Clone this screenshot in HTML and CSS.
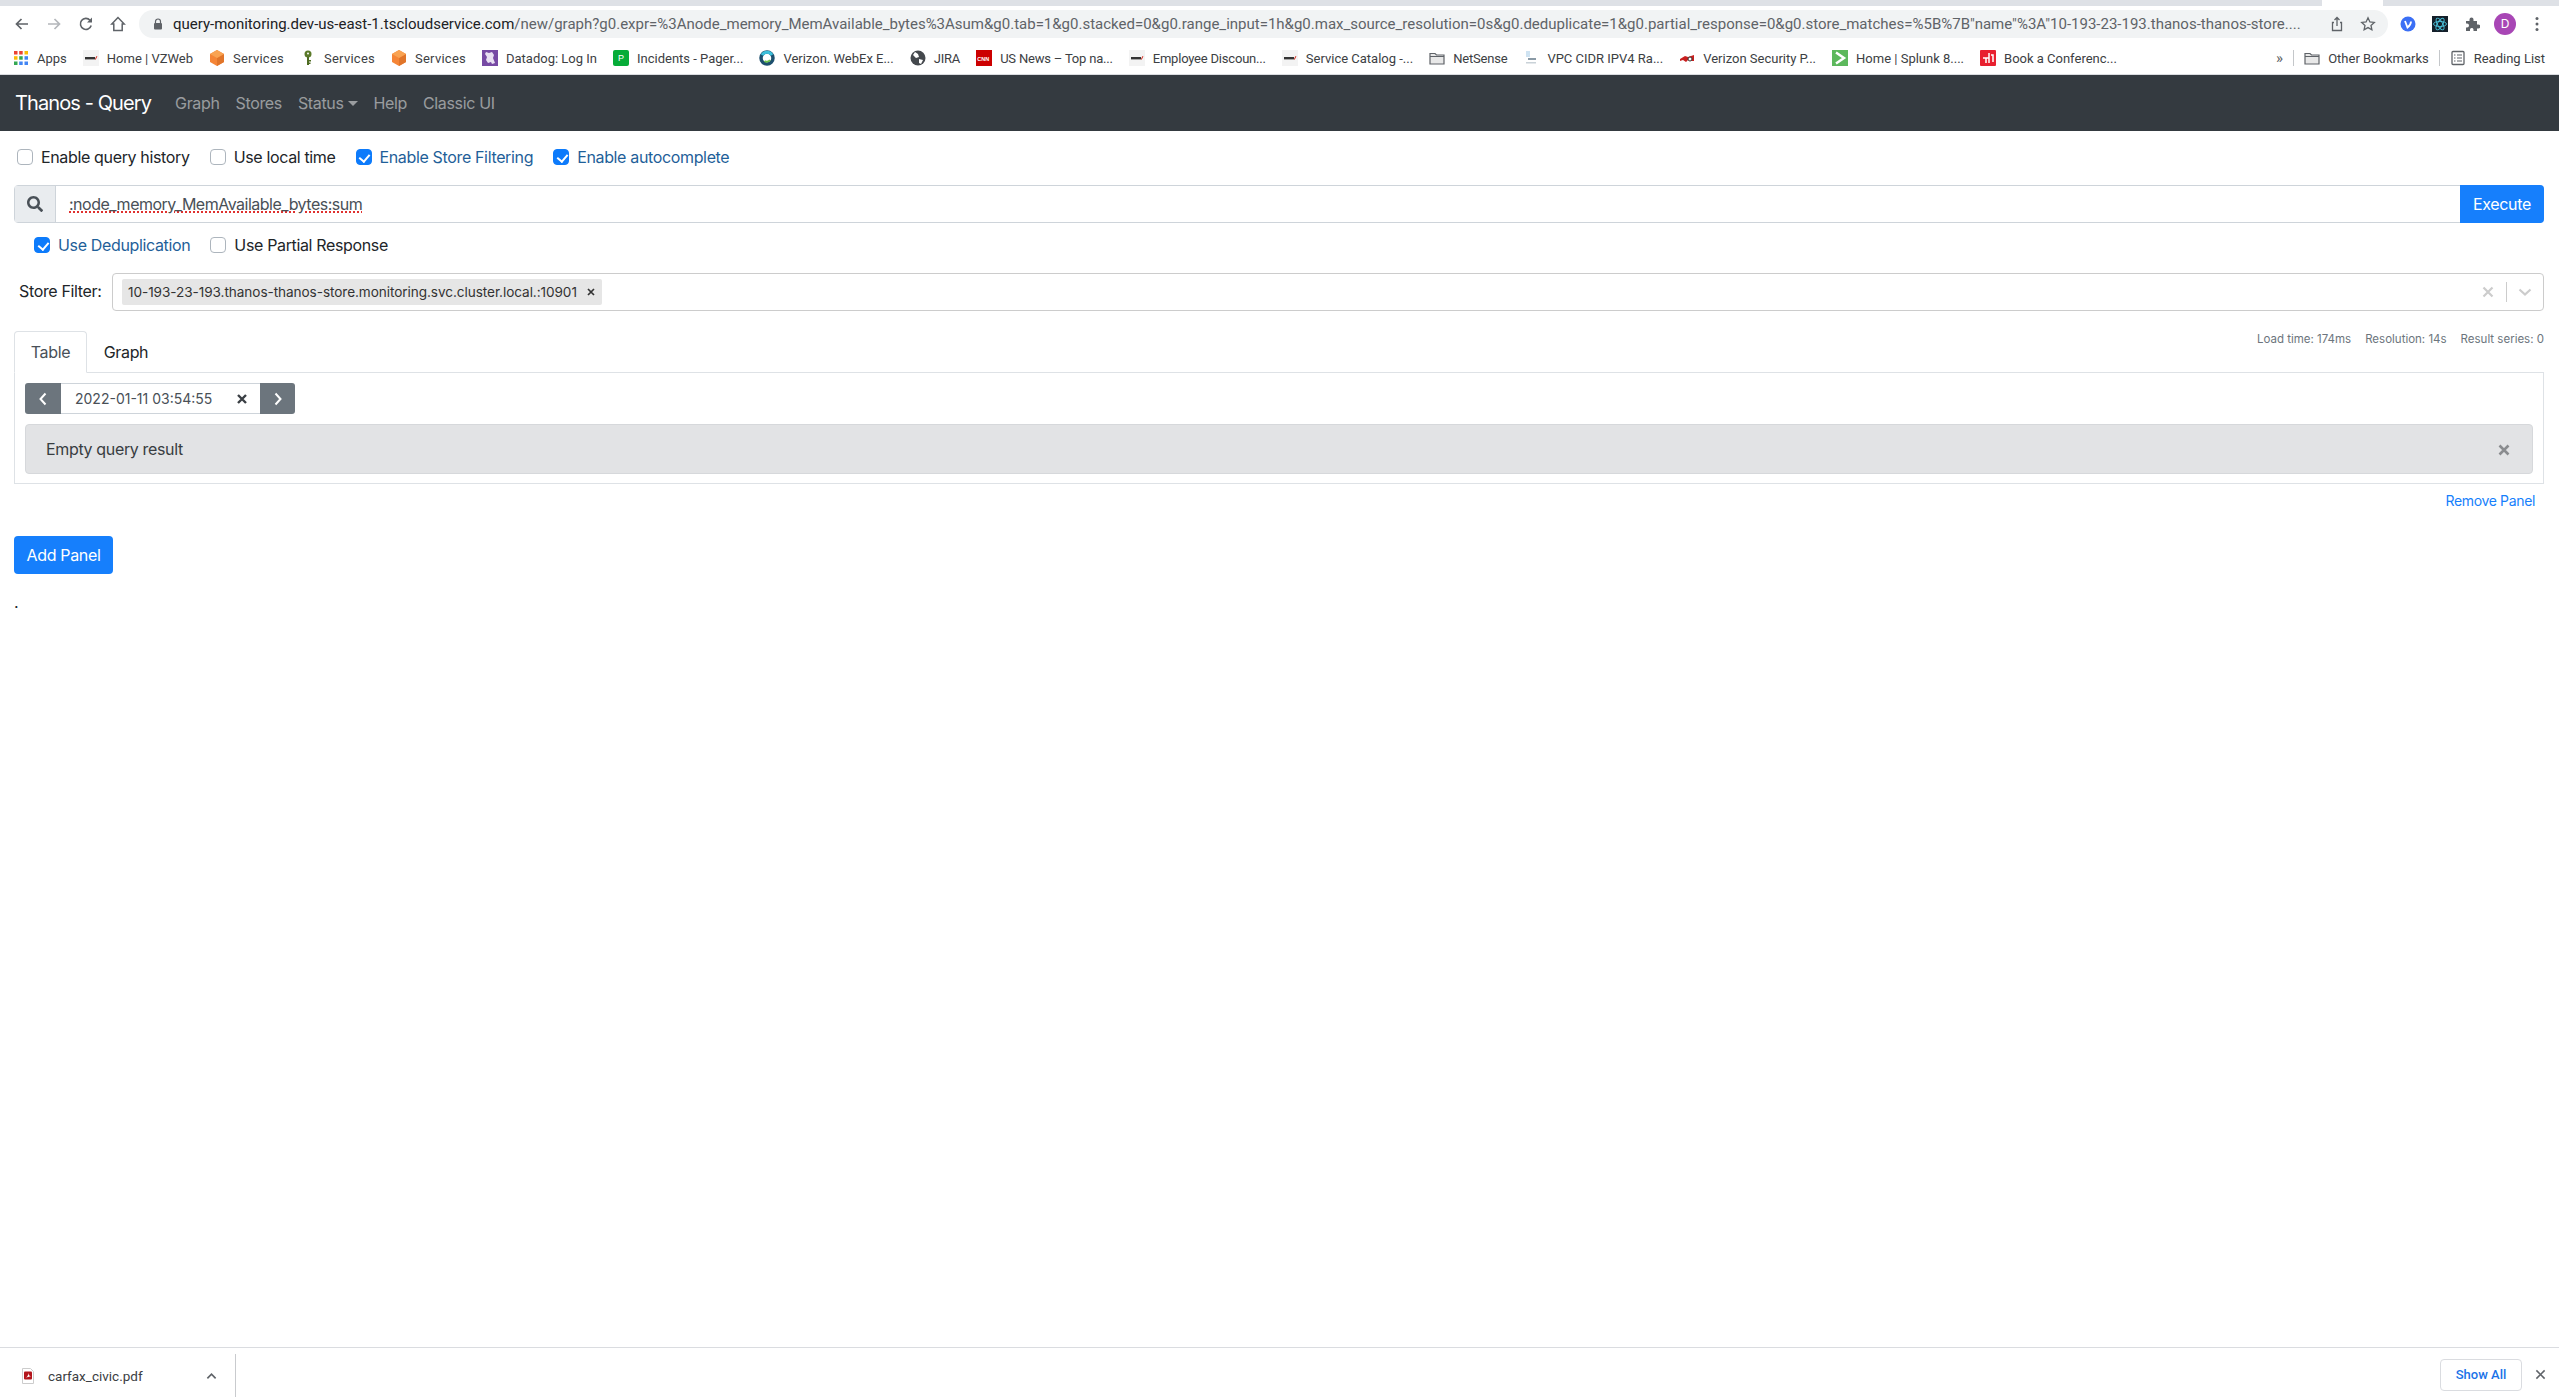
FILE: index.html
```html
<!DOCTYPE html>
<html lang="en">
<head>
    <meta charset="UTF-8">
    <title>Thanos | Highly available Prometheus setup</title>
    <link rel="stylesheet" href="styles.css">
</head>
<body>
    <svg class="sprite" xmlns="http://www.w3.org/2000/svg">
        <symbol id="ic-vz" viewBox="0 0 16 16"><rect width="16" height="16" fill="#f3f3f3"/><rect x="2" y="7" width="10" height="2.4" fill="#333"/><path d="M12 9l1.6-3 .8.3L12.6 10z" fill="#d52b1e"/></symbol>
        <symbol id="ic-cube" viewBox="0 0 16 16"><path d="M8 0l7 4v8l-7 4-7-4V4z" fill="#f58536"/><path d="M8 8l7-4v8l-7 4z" fill="#e0752a"/><path d="M8 0l7 4-7 4-7-4z" fill="#f9a352"/></symbol>
        <symbol id="ic-folder" viewBox="0 0 16 16"><path d="M1 3.5h5l1.5 1.5H15v9H1z" fill="#e8e8e8" stroke="#5f6368" stroke-width="1.2"/><path d="M1 6.5h14" stroke="#5f6368" stroke-width="1"/></symbol>
    </svg>

    <div class="tab-strip"><div class="tab-strip-active"></div></div>

    <div class="toolbar">
        <svg class="tool-icon" viewBox="0 0 16 16"><path d="M14 8H3M7.5 3L2.5 8l5 5" fill="none" stroke="#5f6368" stroke-width="1.7"/></svg>
        <svg class="tool-icon" viewBox="0 0 16 16"><path d="M2 8h11M8.5 3l5 5-5 5" fill="none" stroke="#b4b7bb" stroke-width="1.7"/></svg>
        <svg class="tool-icon" viewBox="0 0 16 16"><path d="M13.2 9.5A5.5 5.5 0 1 1 12 4.2" fill="none" stroke="#5f6368" stroke-width="1.6"/><path d="M14 1.5v5h-5z" fill="#5f6368"/></svg>
        <svg class="tool-icon" viewBox="0 0 16 16"><path d="M8 1.5L1.8 8h2v6.5h8.4V8h2z" fill="none" stroke="#5f6368" stroke-width="1.5"/></svg>
        <div class="omnibox">
            <svg class="lock" viewBox="0 0 10 12"><path d="M2.5 5V3.5a2.5 2.5 0 0 1 5 0V5" fill="none" stroke="#5f6368" stroke-width="1.2"/><rect x="1" y="5" width="8" height="6.5" rx="1" fill="#5f6368"/></svg>
            <div class="url"><span class="url-host">query-monitoring.dev-us-east-1.tscloudservice.com</span>/new/graph?g0.expr=%3Anode_memory_MemAvailable_bytes%3Asum&amp;g0.tab=1&amp;g0.stacked=0&amp;g0.range_input=1h&amp;g0.max_source_resolution=0s&amp;g0.deduplicate=1&amp;g0.partial_response=0&amp;g0.store_matches=%5B%7B"name"%3A"10-193-23-193.thanos-thanos-store....</div>
            <svg class="omni-icon" viewBox="0 0 16 16"><path d="M8 10V1.5M5.5 4L8 1.5 10.500 4M5 6.500H3.500v8h9v-8H11" fill="none" stroke="#5f6368" stroke-width="1.300"/></svg>
            <svg class="omni-icon" viewBox="0 0 16 16"><path d="M8 1.800l1.900 4.100 4.400.500-3.300 3 .9 4.400L8 11.600l-3.900 2.200.9-4.400-3.300-3 4.400-.5z" fill="none" stroke="#5f6368" stroke-width="1.300"/></svg>
        </div>
        <div class="ext-icons">
            <svg class="ext" viewBox="0 0 16 16"><circle cx="8" cy="8" r="7.500" fill="#3b6ff5"/><path d="M5 5l2.500 6.500C9.500 10 11 7.500 11 5.500" fill="none" stroke="#fff" stroke-width="1.800"/></svg>
            <svg class="ext" viewBox="0 0 16 16"><rect width="16" height="16" fill="#14202a"/><g fill="none" stroke="#4cc4dd" stroke-width="0.900"><ellipse cx="8" cy="8" rx="6.500" ry="2.600"/><ellipse cx="8" cy="8" rx="6.500" ry="2.600" transform="rotate(60 8 8)"/><ellipse cx="8" cy="8" rx="6.500" ry="2.600" transform="rotate(120 8 8)"/></g></svg>
            <svg class="ext" viewBox="0 0 16 16"><path d="M2 5h3.500V3.500a2 2 0 0 1 4 0V5H13v3.500h1.300a2 2 0 0 1 0 4H13V15H9.500v-1.500a1.800 1.800 0 0 0-3.500 0V15H2v-3.500h1a2 2 0 0 0 0-4H2z" fill="#5f6368"/></svg>
            <div class="avatar">D</div>
            <svg class="menu-dots" viewBox="0 0 4 16"><circle cx="2" cy="2.500" r="1.500" fill="#5f6368"/><circle cx="2" cy="8" r="1.500" fill="#5f6368"/><circle cx="2" cy="13.500" r="1.500" fill="#5f6368"/></svg>
        </div>
    </div>

    <div class="bookmarks">
        <div class="bm bm-apps">
            <svg class="fav" viewBox="0 0 16 16">
                <rect x="1" y="1" width="3.500" height="3.500" fill="#ea4335"/><rect x="6.200" y="1" width="3.500" height="3.500" fill="#ea4335"/><rect x="11.500" y="1" width="3.500" height="3.500" fill="#fbbc05"/>
                <rect x="1" y="6.200" width="3.500" height="3.500" fill="#fbbc05"/><rect x="6.200" y="6.200" width="3.500" height="3.500" fill="#34a853"/><rect x="11.500" y="6.200" width="3.500" height="3.500" fill="#4285f4"/>
                <rect x="1" y="11.500" width="3.500" height="3.500" fill="#34a853"/><rect x="6.200" y="11.500" width="3.500" height="3.500" fill="#4285f4"/><rect x="11.500" y="11.500" width="3.500" height="3.500" fill="#4285f4"/>
            </svg>
            <span>Apps</span>
        </div>
        <div class="bm"><svg class="fav"><use href="#ic-vz"/></svg><span>Home | VZWeb</span></div>
        <div class="bm bm-wide"><svg class="fav"><use href="#ic-cube"/></svg><span>Services</span></div>
        <div class="bm bm-wide">
            <svg class="fav" viewBox="0 0 16 16"><circle cx="8" cy="4" r="3.500" fill="#5b7a2a"/><circle cx="8" cy="3.500" r="1" fill="#fff"/><path d="M7 7h2v8H7zM9 10h2v1.500H9zM9 12.500h1.500V14H9z" fill="#4e6b22"/></svg>
            <span>Services</span>
        </div>
        <div class="bm bm-wide"><svg class="fav"><use href="#ic-cube"/></svg><span>Services</span></div>
        <div class="bm">
            <svg class="fav" viewBox="0 0 16 16"><rect width="16" height="16" fill="#774aa4"/><path d="M4 2l3 1 3-1 2 3-1 3 2 5-3 1-1-2-3 1-2-3 1-3-2-3z" fill="#e9e0f2"/></svg>
            <span>Datadog: Log In</span>
        </div>
        <div class="bm">
            <svg class="fav" viewBox="0 0 16 16"><rect width="16" height="16" rx="2" fill="#06ac38"/><text x="5" y="11" class="fav-letter">P</text></svg>
            <span>Incidents - Pager...</span>
        </div>
        <div class="bm">
            <svg class="fav" viewBox="0 0 16 16"><circle cx="8" cy="8" r="6" fill="none" stroke="#1d4f6e" stroke-width="3.500"/><path d="M3 5A6 6 0 0 1 13 5" fill="none" stroke="#3cc0dc" stroke-width="3"/><path d="M5.500 11a4 4 0 0 0 5.500-1" fill="none" stroke="#6cc04a" stroke-width="2"/></svg>
            <span>Verizon. WebEx E...</span>
        </div>
        <div class="bm bm-tight">
            <svg class="fav" viewBox="0 0 16 16"><circle cx="8" cy="8" r="7.500" fill="#44484d"/><path d="M5 2l3 2 1 3-3 1-3-3zM9 9l4 1-2 4-2-1z" fill="#fff"/></svg>
            <span>JIRA</span>
        </div>
        <div class="bm bm-tight">
            <svg class="fav" viewBox="0 0 16 16"><rect width="16" height="16" fill="#cc0000"/><text x="1.200" y="10.500" class="fav-cnn">CNN</text></svg>
            <span>US News – Top na...</span>
        </div>
        <div class="bm bm-tight"><svg class="fav"><use href="#ic-vz"/></svg><span>Employee Discoun...</span></div>
        <div class="bm"><svg class="fav"><use href="#ic-vz"/></svg><span>Service Catalog -...</span></div>
        <div class="bm bm-tight"><svg class="fav"><use href="#ic-folder"/></svg><span>NetSense</span></div>
        <div class="bm">
            <svg class="fav" viewBox="0 0 16 16"><rect x="3" y="1" width="4" height="6" fill="#cfe3f2"/><rect x="5" y="8" width="8" height="2" fill="#8a9aa6"/><rect x="3" y="12" width="10" height="1.500" fill="#c9d2d8"/></svg>
            <span>VPC CIDR IPV4 Ra...</span>
        </div>
        <div class="bm">
            <svg class="fav" viewBox="0 0 16 16"><path d="M1 9l5-3 3 1 6-2v6h-3l-2-2-3 3-3-2-3 1z" fill="#c8201f"/><circle cx="11" cy="9" r="2" fill="#fff" stroke="#333"/></svg>
            <span>Verizon Security P...</span>
        </div>
        <div class="bm">
            <svg class="fav" viewBox="0 0 16 16"><rect width="16" height="16" fill="#5cb85c"/><path d="M4 2.500L12 8l-8 5.500" fill="none" stroke="#fff" stroke-width="2.500"/></svg>
            <span>Home | Splunk 8....</span>
        </div>
        <div class="bm">
            <svg class="fav" viewBox="0 0 16 16"><rect width="16" height="16" rx="1" fill="#e8202f"/><path d="M3 8h6M9 3v10M6 8v5M11 5h2v7" fill="none" stroke="#fff" stroke-width="1.500"/></svg>
            <span>Book a Conferenc...</span>
        </div>
        <div class="bm-end">
            <span class="bm-more">»</span>
            <div class="bm-sep"></div>
            <div class="bm"><svg class="fav"><use href="#ic-folder"/></svg><span>Other Bookmarks</span></div>
            <div class="bm-sep"></div>
            <div class="bm">
                <svg class="fav" viewBox="0 0 16 16"><rect x="2" y="1.500" width="12" height="13" rx="1" fill="none" stroke="#5f6368" stroke-width="1.300"/><path d="M4 5h1.500M7 5h5M4 8h1.500M7 8h5M4 11h1.500M7 11h5" stroke="#5f6368" stroke-width="1.200"/></svg>
                <span>Reading List</span>
            </div>
        </div>
    </div>

    <nav class="navbar">
        <a class="navbar-brand">Thanos - Query</a>
        <a class="nav-link">Graph</a>
        <a class="nav-link">Stores</a>
        <a class="nav-link dropdown-toggle">Status</a>
        <a class="nav-link">Help</a>
        <a class="nav-link">Classic UI</a>
    </nav>

    <main class="content">
        <div class="options">
            <label class="check"><input type="checkbox"><span>Enable query history</span></label>
            <label class="check"><input type="checkbox"><span>Use local time</span></label>
            <label class="check is-on"><input type="checkbox" checked><span>Enable Store Filtering</span></label>
            <label class="check is-on"><input type="checkbox" checked><span>Enable autocomplete</span></label>
        </div>

        <div class="input-group">
            <div class="input-prepend">
                <svg class="search-icon" viewBox="0 0 512 512"><path d="M505 442.700L405.300 343c-4.500-4.500-10.600-7-17-7H372c27.600-35.300 44-79.700 44-128C416 93.100 322.900 0 208 0S0 93.100 0 208s93.100 208 208 208c48.300 0 92.700-16.400 128-44v16.300c0 6.400 2.500 12.500 7 17l99.700 99.700c9.400 9.400 24.600 9.400 33.900 0l28.300-28.300c9.400-9.400 9.400-24.600.1-34zM208 336c-70.700 0-128-57.200-128-128 0-70.700 57.200-128 128-128 70.700 0 128 57.200 128 128 0 70.700-57.200 128-128 128z" fill="#495057"/></svg>
            </div>
            <div class="expr-input"><span class="misspelled">:node_memory_MemAvailable_bytes:sum</span></div>
            <button class="btn-execute">Execute</button>
        </div>

        <div class="options-sub">
            <label class="check is-on"><input type="checkbox" checked><span>Use Deduplication</span></label>
            <label class="check"><input type="checkbox"><span>Use Partial Response</span></label>
        </div>

        <div class="store-filter">
            <span class="store-label">Store Filter:</span>
            <div class="select">
                <div class="chip">
                    <span>10-193-23-193.thanos-thanos-store.monitoring.svc.cluster.local.:10901</span>
                    <svg class="chip-x" viewBox="0 0 10 10"><path d="M2 2l6 6M8 2l-6 6" stroke="#333" stroke-width="1.700"/></svg>
                </div>
                <div class="select-tools">
                    <svg class="select-x" viewBox="0 0 12 12"><path d="M1.500 1.500l9 9M10.500 1.500l-9 9" stroke="#ccc" stroke-width="2.200"/></svg>
                    <div class="select-sep"></div>
                    <svg class="select-chev" viewBox="0 0 14 8"><path d="M1.500 1.500L7 6.500l5.500-5" fill="none" stroke="#ccc" stroke-width="2.200"/></svg>
                </div>
            </div>
        </div>

        <div class="tabs-row">
            <div class="tab tab-active">Table</div>
            <div class="tab">Graph</div>
            <div class="query-stats">
                <span>Load time: 174ms</span>
                <span>Resolution: 14s</span>
                <span>Result series: 0</span>
            </div>
        </div>

        <div class="tab-panel">
            <div class="time-input">
                <button class="time-btn">
                    <svg class="time-chev" viewBox="0 0 8 14"><path d="M6.500 1.500L1.500 7l5 5.500" fill="none" stroke="#fff" stroke-width="2"/></svg>
                </button>
                <div class="time-value">
                    <span>2022-01-11 03:54:55</span>
                    <svg class="time-x" viewBox="0 0 12 12"><path d="M2 2l8 8M10 2l-8 8" stroke="#3a3f44" stroke-width="2.400"/></svg>
                </div>
                <button class="time-btn">
                    <svg class="time-chev" viewBox="0 0 8 14"><path d="M1.500 1.500l5 5.500-5 5.500" fill="none" stroke="#fff" stroke-width="2"/></svg>
                </button>
            </div>
            <div class="alert">
                <span>Empty query result</span>
                <svg class="alert-x" viewBox="0 0 12 12"><path d="M1.500 1.500l9 9M10.500 1.500l-9 9" stroke="#8a8c8f" stroke-width="2.600"/></svg>
            </div>
        </div>

        <div class="remove-row"><a class="remove-link">Remove Panel</a></div>
        <button class="btn-add">Add Panel</button>
        <div class="dot">.</div>
    </main>

    <footer class="shelf">
        <div class="download">
            <svg class="pdf-icon" viewBox="0 0 12 16"><path d="M.500.500h8l3 3v12H.500z" fill="#fff" stroke="#ccc"/><rect x="2" y="3.500" width="8" height="8" rx="1" fill="#b3151c"/><path d="M3.500 10c2-1 3-3 2.500-5 .5 2 1.500 3 3 3.500-2 0-3.500.500-5.500 1.500z" fill="#fff"/></svg>
            <span class="file-name">carfax_civic.pdf</span>
            <svg class="file-chev" viewBox="0 0 12 8"><path d="M1.500 6.500L6 2l4.500 4.500" fill="none" stroke="#5f6368" stroke-width="1.800"/></svg>
        </div>
        <div class="shelf-end">
            <button class="btn-show">Show All</button>
            <svg class="shelf-x" viewBox="0 0 12 12"><path d="M1.500 1.500l9 9M10.500 1.500l-9 9" stroke="#5f6368" stroke-width="1.700"/></svg>
        </div>
    </footer>
</body>
</html>
```

FILE: styles.css
```css
:root {
    --blue: #167ffc;
    --check-blue: #0d7bfb;
    --label-blue: #1f5f99;
    --border: #ced4da;
    --panel-border: #dee2e6;
    --text: #212529;
    --chrome-text: #3c4043;
}

* {
    box-sizing: border-box;
}

html, body {
    height: 100%;
}

body {
    margin: 0;
    display: flex;
    flex-direction: column;
    overflow: hidden;
    background-color: #fff;
    color: var(--text);
    font-family: Inter, 'Liberation Sans', sans-serif;
    font-size: 16px;
    letter-spacing: -0.35px;
}

.sprite {
    display: none;
}

/* browser chrome */
.tab-strip {
    height: 6px;
    flex: none;
    display: flex;
    justify-content: flex-end;
    padding-right: 176px;
    background-color: #dee1e6;
}

.tab-strip-active {
    width: 61px;
    background-color: #fff;
}

.toolbar {
    height: 36px;
    flex: none;
    display: flex;
    align-items: center;
    padding-left: 14px;
    background-color: #fff;
}

.tool-icon {
    width: 16px;
    height: 16px;
    margin-right: 16px;
}

.omnibox {
    width: 2249px;
    height: 28px;
    margin-left: -3px;
    display: flex;
    align-items: center;
    padding: 0 12px 0 14px;
    border-radius: 14px;
    background-color: #f1f3f4;
}

.lock {
    width: 10px;
    height: 12px;
    flex: none;
    margin-right: 10px;
}

.url {
    flex: 1;
    min-width: 0;
    overflow: hidden;
    white-space: nowrap;
    color: #5f6368;
    font-family: Roboto, sans-serif;
    font-size: 15px;
    letter-spacing: 0;
}

.url-host {
    color: #202124;
}

.omni-icon {
    width: 16px;
    height: 16px;
    flex: none;
    margin-left: 15px;
}

.ext-icons {
    flex: 1;
    display: flex;
    align-items: center;
    padding-left: 12px;
}

.ext {
    width: 16px;
    height: 16px;
    margin-right: 16px;
}

.avatar {
    width: 22px;
    height: 22px;
    margin-left: -2px;
    margin-right: 19px;
    border-radius: 50%;
    background-color: #a846b5;
    color: #fff;
    font-size: 12px;
    line-height: 22px;
    text-align: center;
}

.menu-dots {
    width: 4px;
    height: 16px;
}

.bookmarks {
    height: 33px;
    flex: none;
    display: flex;
    align-items: center;
    gap: 16px;
    padding-left: 13px;
    border-bottom: 1px solid #dadce0;
    background-color: #fff;
    color: var(--chrome-text);
    font-family: Roboto, sans-serif;
    font-size: 13px;
    letter-spacing: 0;
}

.bm {
    display: flex;
    align-items: center;
    gap: 8px;
    white-space: nowrap;
}

.bm-wide span {
    letter-spacing: 0.25px;
}

.bm-tight span {
    letter-spacing: -0.2px;
}

.fav {
    width: 16px;
    height: 16px;
    flex: none;
}

.fav-letter {
    fill: #fff;
    font-size: 9px;
    font-family: 'Liberation Sans', sans-serif;
}

.fav-cnn {
    fill: #fff;
    font-size: 5.500px;
    font-weight: 700;
    font-family: 'Liberation Sans', sans-serif;
}

.bm-end {
    margin-left: auto;
    display: flex;
    align-items: center;
    gap: 10px;
    padding-right: 14px;
}

.bm-more {
    font-size: 15px;
    color: #5f6368;
}

.bm-sep {
    width: 1px;
    height: 16px;
    background-color: #c4c7ca;
}

/* thanos navbar */
.navbar {
    height: 56px;
    flex: none;
    display: flex;
    align-items: center;
    padding-left: 15px;
    background-color: #343a40;
}

.navbar-brand {
    margin-right: 16px;
    color: #fff;
    font-size: 20px;
    letter-spacing: -0.9px;
}

.nav-link {
    padding: 0 8px;
    color: rgba(255, 255, 255, 0.5);
    white-space: nowrap;
}

.dropdown-toggle::after {
    content: "";
    display: inline-block;
    margin-left: 4px;
    vertical-align: 3px;
    border-top: 5px solid;
    border-left: 5px solid transparent;
    border-right: 5px solid transparent;
}

/* page */
.content {
    flex: 1;
    min-height: 0;
    padding: 0 15px 0 14px;
}

.options {
    height: 54px;
    display: flex;
    align-items: center;
    gap: 20px;
    padding-left: 3px;
    padding-bottom: 2px;
}

.check {
    display: flex;
    align-items: center;
    gap: 8px;
    white-space: nowrap;
}

.check.is-on {
    color: var(--label-blue);
}

.check input {
    appearance: none;
    width: 16px;
    height: 16px;
    margin: 0;
    position: relative;
    border: 1px solid #adb5bd;
    border-radius: 4px;
    background-color: #fff;
}

.check input:checked {
    border-color: var(--check-blue);
    background-color: var(--check-blue);
}

.check input:checked::after {
    content: "";
    position: absolute;
    left: 4.500px;
    top: 2px;
    width: 5px;
    height: 8px;
    border: solid #fff;
    border-width: 0 2px 2px 0;
    transform: rotate(40deg);
}

.input-group {
    height: 38px;
    display: flex;
    border: 1px solid var(--border);
    border-radius: 4px;
}

.input-prepend {
    width: 41px;
    display: flex;
    align-items: center;
    justify-content: center;
    border-right: 1px solid var(--border);
    background-color: #e9ecef;
}

.search-icon {
    width: 16px;
    height: 16px;
}

.expr-input {
    flex: 1;
    display: flex;
    align-items: center;
    padding-left: 13px;
    color: #495057;
    letter-spacing: -0.5px;
}

.misspelled {
    text-decoration: underline dotted #e0312f 1.500px;
    text-underline-offset: 1px;
}

.btn-execute {
    width: 84px;
    margin: -1px;
    border: none;
    border-radius: 0 4px 4px 0;
    background-color: var(--blue);
    color: #fff;
    font: inherit;
    letter-spacing: inherit;
}

.options-sub {
    margin-top: 12px;
    height: 20px;
    display: flex;
    align-items: center;
    gap: 20px;
    padding-left: 20px;
}

.store-filter {
    margin-top: 18px;
    display: flex;
    align-items: center;
    gap: 10px;
    padding-left: 5px;
}

.store-label {
    width: 83px;
    white-space: nowrap;
    padding-bottom: 2px;
}

.select {
    flex: 1;
    height: 38px;
    display: flex;
    align-items: center;
    padding-left: 9px;
    border: 1px solid #ccc;
    border-radius: 4px;
}

.chip {
    height: 26px;
    display: flex;
    align-items: center;
    gap: 9px;
    padding: 0 6px;
    border-radius: 2px;
    background-color: #e6e6e6;
    color: #333;
    font-size: 13.600px;
    letter-spacing: -0.07px;
    white-space: nowrap;
}

.chip-x {
    width: 10px;
    height: 10px;
}

.select-tools {
    margin-left: auto;
    display: flex;
    align-items: center;
}

.select-x {
    width: 12px;
    height: 12px;
}

.select-sep {
    width: 1px;
    height: 20px;
    margin: 0 11px 0 12px;
    background-color: #ccc;
}

.select-chev {
    width: 14px;
    height: 8px;
    margin-right: 11px;
}

.tabs-row {
    margin-top: 20px;
    height: 41px;
    display: flex;
    align-items: stretch;
}

.tab {
    width: 73px;
    display: flex;
    align-items: center;
    justify-content: center;
    border: 1px solid transparent;
    margin-bottom: -1px;
}

.tab + .tab {
    padding-left: 5px;
}

.tab-active {
    border-color: var(--panel-border);
    border-bottom-color: #fff;
    border-radius: 4px 4px 0 0;
    background-color: #fff;
    color: #495057;
    position: relative;
}

.query-stats {
    margin-left: auto;
    height: 16px;
    display: flex;
    gap: 14px;
    color: #6c757d;
    font-size: 11.500px;
    letter-spacing: 0;
    line-height: 16px;
    white-space: nowrap;
}

.tab-panel {
    padding: 10px 10px 9px;
    border: 1px solid var(--panel-border);
}

.time-input {
    width: 270px;
    height: 31px;
    display: flex;
    font-size: 14px;
    letter-spacing: 0;
}

.time-btn {
    width: 36px;
    padding: 0;
    display: flex;
    align-items: center;
    justify-content: center;
    border: none;
    background-color: #6c757d;
}

.time-btn:first-child {
    border-radius: 3px 0 0 3px;
}

.time-btn:last-child {
    width: 35px;
    border-radius: 0 3px 3px 0;
}

.time-chev {
    width: 8px;
    height: 14px;
}

.time-value {
    flex: 1;
    display: flex;
    align-items: center;
    justify-content: space-between;
    padding: 0 12px 0 14px;
    border-top: 1px solid var(--border);
    border-bottom: 1px solid var(--border);
    color: #495057;
}

.time-x {
    width: 12px;
    height: 12px;
}

.alert {
    height: 50px;
    margin-top: 10px;
    display: flex;
    align-items: center;
    justify-content: space-between;
    padding: 0 22px 0 20px;
    border: 1px solid #d6d8db;
    border-radius: 4px;
    background-color: #e2e3e5;
    color: #383d41;
}

.alert-x {
    width: 12px;
    height: 12px;
    margin-top: 2px;
}

.remove-row {
    margin-top: 6px;
    height: 22px;
    padding-right: 9px;
    text-align: right;
    font-size: 14px;
    line-height: 22px;
}

.remove-link {
    color: var(--blue);
}

.btn-add {
    display: block;
    width: 99px;
    height: 38px;
    margin-top: 24px;
    border: none;
    border-radius: 4px;
    background-color: var(--blue);
    color: #fff;
    font: inherit;
    letter-spacing: inherit;
}

.dot {
    margin-top: 16px;
    line-height: 24px;
}

/* download shelf */
.shelf {
    height: 50px;
    flex: none;
    display: flex;
    align-items: stretch;
    border-top: 1px solid #dadce0;
    background-color: #fff;
    font-family: Roboto, sans-serif;
    letter-spacing: 0;
}

.download {
    width: 236px;
    margin-top: 6px;
    display: flex;
    align-items: center;
    padding: 0 18px 0 22px;
    border-right: 1px solid #c9cbce;
}

.pdf-icon {
    width: 12px;
    height: 16px;
    flex: none;
}

.file-name {
    margin-left: 14px;
    color: var(--chrome-text);
    font-size: 13.500px;
}

.file-chev {
    width: 11px;
    height: 8px;
    margin-left: auto;
}

.shelf-end {
    margin-left: auto;
    display: flex;
    align-items: center;
    gap: 13px;
    padding-right: 13px;
    padding-top: 4px;
}

.btn-show {
    width: 82px;
    height: 32px;
    border: 1px solid #dadce0;
    border-radius: 4px;
    background-color: #fff;
    color: #1a73e8;
    font-family: inherit;
    font-size: 13px;
    font-weight: 500;
}

.shelf-x {
    width: 11px;
    height: 11px;
}
```
